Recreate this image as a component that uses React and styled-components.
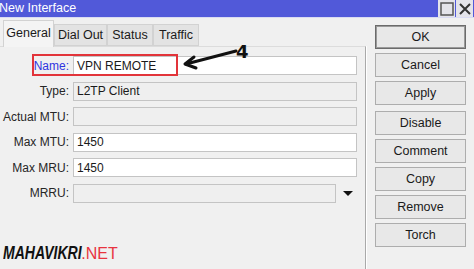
import React from 'react';
import styled, { createGlobalStyle } from 'styled-components';

const Global = createGlobalStyle`
  html, body { margin: 0; padding: 0; background: #f0f0f0; }
  body { font-family: "Liberation Sans", Arial, sans-serif; }
  #root { width: 474px; height: 269px; }
`;

const Window = styled.div`
  position: relative;
  width: 474px;
  height: 269px;
  overflow: hidden;
  background: #f0f0f0;
  display: flex;
  flex-direction: column;
`;

const TitleBar = styled.div`
  height: 17px;
  flex: none;
  background: #5159d9;
  display: flex;
  align-items: center;
  justify-content: space-between;
  border-bottom: 1px solid #d9dbf2;
`;

const Title = styled.span`
  color: #fff;
  font-size: 12.5px;
  margin-left: -1px;
  line-height: 17px;
`;

const Controls = styled.div`
  display: flex;
  height: 17px;
  gap: 1px;
  padding-right: 1px;
`;

const CtrlBtn = styled.div`
  width: 17px;
  height: 17px;
  background: #e4e4ea;
  display: flex;
  align-items: center;
  justify-content: center;
`;

const Body = styled.div`
  flex: 1;
  display: flex;
  min-height: 0;
`;

const LeftPane = styled.div`
  width: 366px;
  display: flex;
  flex-direction: column;
`;

const TabStrip = styled.div`
  height: 27px;
  margin-top: 1px;
  padding-left: 3px;
  display: flex;
  align-items: flex-end;
  position: relative;
  z-index: 1;
`;

const Tab = styled.div`
  height: ${p => (p.$active ? '27px' : '22px')};
  width: ${p => p.$w}px;
  box-sizing: border-box;
  margin-bottom: ${p => (p.$active ? '-1px' : '0')};
  background: ${p => (p.$active ? '#f4f4f4' : '#e3e3e3')};
  border: 1px solid #d2d2d2;
  border-bottom: ${p => (p.$active ? 'none' : '1px solid #d2d2d2')};
  font-size: 12.5px;
  color: #1a1a1a;
  display: flex;
  align-items: center;
  justify-content: center;
  padding-bottom: ${p => (p.$active ? '2px' : '0')};
`;

const Panel = styled.div`
  flex: 1;
  border-top: 1px solid #dcdcdc;
  border-right: 1px solid #a9a9a9;
  box-shadow: 1px 0 0 #ffffff;
  padding-top: 9px;
  display: flex;
  flex-direction: column;
  gap: 6.6px;
`;

const Row = styled.div`
  display: flex;
  align-items: center;
  height: 19px;
`;

const Label = styled.div`
  width: 69px;
  text-align: right;
  font-size: 12px;
  color: ${p => (p.$blue ? '#2f35e0' : '#262626')};
  margin-right: 4px;
  white-space: nowrap;
`;

const Field = styled.div`
  width: ${p => p.$w || 284}px;
  height: 19px;
  box-sizing: border-box;
  border: 1px solid #c4c4c4;
  background: ${p => (p.$editable ? '#ffffff' : '#efefef')};
  font-size: 12px;
  color: #1a1a1a;
  padding-left: 3px;
  display: flex;
  align-items: center;
`;

const DropArrow = styled.div`
  margin-left: 7px;
  width: 0;
  height: 0;
  border-left: 5px solid transparent;
  border-right: 5px solid transparent;
  border-top: 5px solid #111;
`;

const ButtonColumn = styled.div`
  padding-left: 9px;
  padding-top: 7px;
  display: flex;
  flex-direction: column;
  gap: 4px;
`;

const Button = styled.div`
  width: 91px;
  height: 24px;
  box-sizing: border-box;
  border: 1px solid ${p => (p.$default ? '#6b6b6b' : '#adadad')};
  box-shadow: ${p => (p.$default ? 'inset 0 0 0 1px #9a9a9a' : 'none')};
  background: #e8e8e8;
  font-size: 12.5px;
  color: #1a1a1a;
  display: flex;
  align-items: center;
  justify-content: center;
  margin-top: ${p => (p.$gapTop ? '2px' : '0')};
`;

const RedBox = styled.div`
  position: absolute;
  left: 32px;
  top: 54px;
  width: 146px;
  height: 22px;
  box-sizing: border-box;
  border: 2px solid #e2343a;
`;

const Annotation = styled.svg`
  position: absolute;
  left: 178px;
  top: 40px;
`;

const Callout = styled.div`
  position: absolute;
  left: 236px;
  top: 41px;
  font-size: 18px;
  font-weight: bold;
  color: #111;
  font-family: "DejaVu Sans", "Liberation Sans", sans-serif;
`;

const Watermark = styled.div`
  position: absolute;
  left: 3px;
  top: 243px;
  line-height: 20px;
  white-space: nowrap;
  display: flex;
  align-items: baseline;
`;

const Brand = styled.span`
  display: inline-block;
  font-family: "Liberation Sans", Arial, sans-serif;
  font-size: 19px;
  font-weight: 900;
  font-style: italic;
  color: #111;
  transform: scaleX(0.74);
  transform-origin: left center;
  margin-right: -28px;
`;

const Tld = styled.span`
  font-family: "Liberation Sans", Arial, sans-serif;
  color: #e8333f;
  font-size: 16px;
`;

const rows = [
  { label: 'Name:', value: 'VPN REMOTE', editable: true, blue: true },
  { label: 'Type:', value: 'L2TP Client' },
  { label: 'Actual MTU:', value: '' },
  { label: 'Max MTU:', value: '1450', editable: true },
  { label: 'Max MRU:', value: '1450', editable: true },
];

const buttons = ['OK', 'Cancel', 'Apply', 'Disable', 'Comment', 'Copy', 'Remove', 'Torch'];

export default function App() {
  return (
    <>
      <Global />
      <Window>
        <TitleBar>
          <Title>New Interface</Title>
          <Controls>
            <CtrlBtn>
              <svg width="14" height="14" viewBox="0 0 14 14">
                <rect x="1" y="1" width="12" height="12" fill="none" stroke="#555" strokeWidth="1.5" />
              </svg>
            </CtrlBtn>
            <CtrlBtn>
              <svg width="14" height="14" viewBox="0 0 14 14">
                <path d="M2 2 L12 12 M12 2 L2 12" stroke="#333" strokeWidth="2" />
              </svg>
            </CtrlBtn>
          </Controls>
        </TitleBar>
        <Body>
          <LeftPane>
            <TabStrip>
              <Tab $active $w={51}>General</Tab>
              <Tab $w={53}>Dial Out</Tab>
              <Tab $w={46}>Status</Tab>
              <Tab $w={46}>Traffic</Tab>
            </TabStrip>
            <Panel>
              {rows.map(r => (
                <Row key={r.label}>
                  <Label $blue={r.blue}>{r.label}</Label>
                  <Field $editable={r.editable}>{r.value}</Field>
                </Row>
              ))}
              <Row>
                <Label>MRRU:</Label>
                <Field $w={263} />
                <DropArrow />
              </Row>
            </Panel>
          </LeftPane>
          <ButtonColumn>
            {buttons.map(b => (
              <Button key={b} $default={b === 'OK'} $gapTop={b === 'Disable'}>{b}</Button>
            ))}
          </ButtonColumn>
        </Body>
        <RedBox />
        <Annotation width="64" height="30" viewBox="0 0 64 30">
          <path d="M8 24 L58 11" stroke="#111" strokeWidth="3" strokeLinecap="round" fill="none" />
          <path d="M16 17 L7 24 L18 28" stroke="#111" strokeWidth="3" strokeLinecap="round" strokeLinejoin="round" fill="none" />
        </Annotation>
        <Callout>4</Callout>
        <Watermark>
          <Brand>MAHAVIKRI</Brand>
          <Tld>.NET</Tld>
        </Watermark>
      </Window>
    </>
  );
}
